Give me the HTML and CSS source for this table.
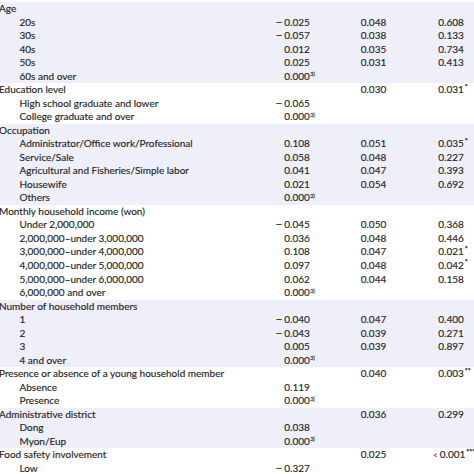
FILE: index.html
```html
<!DOCTYPE html>
<html>
<head>
<meta charset="utf-8">
<link rel="stylesheet" href="styles.css">
</head>
<body>
<div class="table">
  <div class="group shade">
    <div class="row"><span class="cat">Age</span><span></span><span></span><span></span></div>
    <div class="row"><span class="sub">20s</span><span><span class="mi">−</span>0.025</span><span>0.048</span><span>0.608</span></div>
    <div class="row"><span class="sub">30s</span><span><span class="mi">−</span>0.057</span><span>0.038</span><span>0.133</span></div>
    <div class="row"><span class="sub">40s</span><span>0.012</span><span>0.035</span><span>0.734</span></div>
    <div class="row"><span class="sub">50s</span><span>0.025</span><span>0.031</span><span>0.413</span></div>
    <div class="row"><span class="sub">60s and over</span><span>0.000<sup class="ref">3)</sup></span><span></span><span></span></div>
  </div>
  <div class="group">
    <div class="row"><span class="cat">Education level</span><span></span><span>0.030</span><span>0.031<sup class="st">*</sup></span></div>
    <div class="row"><span class="sub">High school graduate and lower</span><span><span class="mi">−</span>0.065</span><span></span><span></span></div>
    <div class="row"><span class="sub">College graduate and over</span><span>0.000<sup class="ref">3)</sup></span><span></span><span></span></div>
  </div>
  <div class="group shade">
    <div class="row"><span class="cat">Occupation</span><span></span><span></span><span></span></div>
    <div class="row"><span class="sub">Administrator/Office work/Professional</span><span>0.108</span><span>0.051</span><span>0.035<sup class="st">*</sup></span></div>
    <div class="row"><span class="sub">Service/Sale</span><span>0.058</span><span>0.048</span><span>0.227</span></div>
    <div class="row"><span class="sub">Agricultural and Fisheries/Simple labor</span><span>0.041</span><span>0.047</span><span>0.393</span></div>
    <div class="row"><span class="sub">Housewife</span><span>0.021</span><span>0.054</span><span>0.692</span></div>
    <div class="row"><span class="sub">Others</span><span>0.000<sup class="ref">3)</sup></span><span></span><span></span></div>
  </div>
  <div class="group">
    <div class="row"><span class="cat">Monthly household income (won)</span><span></span><span></span><span></span></div>
    <div class="row"><span class="sub">Under 2,000,000</span><span><span class="mi">−</span>0.045</span><span>0.050</span><span>0.368</span></div>
    <div class="row"><span class="sub">2,000,000–under 3,000,000</span><span>0.036</span><span>0.048</span><span>0.446</span></div>
    <div class="row"><span class="sub">3,000,000–under 4,000,000</span><span>0.108</span><span>0.047</span><span>0.021<sup class="st">*</sup></span></div>
    <div class="row"><span class="sub">4,000,000–under 5,000,000</span><span>0.097</span><span>0.048</span><span>0.042<sup class="st">*</sup></span></div>
    <div class="row"><span class="sub">5,000,000–under 6,000,000</span><span>0.062</span><span>0.044</span><span>0.158</span></div>
    <div class="row"><span class="sub">6,000,000 and over</span><span>0.000<sup class="ref">3)</sup></span><span></span><span></span></div>
  </div>
  <div class="group shade">
    <div class="row"><span class="cat">Number of household members</span><span></span><span></span><span></span></div>
    <div class="row"><span class="sub">1</span><span><span class="mi">−</span>0.040</span><span>0.047</span><span>0.400</span></div>
    <div class="row"><span class="sub">2</span><span><span class="mi">−</span>0.043</span><span>0.039</span><span>0.271</span></div>
    <div class="row"><span class="sub">3</span><span>0.005</span><span>0.039</span><span>0.897</span></div>
    <div class="row"><span class="sub">4 and over</span><span>0.000<sup class="ref">3)</sup></span><span></span><span></span></div>
  </div>
  <div class="group">
    <div class="row"><span class="cat">Presence or absence of a young household member</span><span></span><span>0.040</span><span>0.003<sup class="st">**</sup></span></div>
    <div class="row"><span class="sub">Absence</span><span>0.119</span><span></span><span></span></div>
    <div class="row"><span class="sub">Presence</span><span>0.000<sup class="ref">3)</sup></span><span></span><span></span></div>
  </div>
  <div class="group shade">
    <div class="row"><span class="cat">Administrative district</span><span></span><span>0.036</span><span>0.299</span></div>
    <div class="row"><span class="sub">Dong</span><span>0.038</span><span></span><span></span></div>
    <div class="row"><span class="sub">Myon/Eup</span><span>0.000<sup class="ref">3)</sup></span><span></span><span></span></div>
  </div>
  <div class="group">
    <div class="row"><span class="cat">Food safety involvement</span><span></span><span>0.025</span><span><span class="lt">&lt;</span>0.001<sup class="st">***</sup></span></div>
    <div class="row"><span class="sub">Low</span><span><span class="mi">−</span>0.327</span><span></span><span></span></div>
  </div>
</div>
</body>
</html>
```
FILE: styles.css
```css
html, body {
  margin: 0;
  padding: 0;
  background: #ffffff;
  overflow: hidden;
}
body {
  font-family: "Lato", "Liberation Sans", sans-serif;
  font-size: 10px;
  color: #262626;
  -webkit-text-stroke: 0.15px #262626;
}
.table {
  padding-top: 2.2px;
  width: 474px;
}
.shade {
  background: #eeeff8;
}
.row {
  display: grid;
  grid-template-columns: 284.3px 76.4px 77.6px 1fr;
  height: 13.53px;
  line-height: 13.53px;
  white-space: nowrap;
}
.cat {
  margin-left: -1px;
}
.sub {
  padding-left: 19.5px;
}
.mi {
  display: inline-block;
  width: 8.6px;
  margin-left: -8.6px;
  font-family: "Liberation Sans", sans-serif;
  font-size: 11px;
}
.lt {
  display: inline-block;
  width: 6.5px;
  margin-left: -5px;
  font-size: 7px;
}
sup {
  line-height: 0;
  vertical-align: 0;
  position: relative;
}
.ref {
  font-size: 5.5px;
  top: -3.5px;
  margin-left: 0.3px;
}
.st {
  font-size: 7px;
  top: -3.5px;
  margin-left: 1px;
}
```
